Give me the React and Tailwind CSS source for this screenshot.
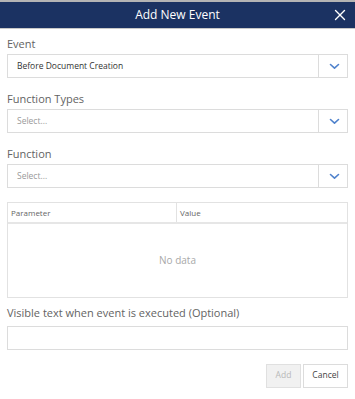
import { useState } from "react";

function Chevron() {
  return (
    <svg width="11" height="7" viewBox="0 0 11 7" fill="none" stroke="#4f82cc" strokeWidth="1.6" strokeLinecap="round" strokeLinejoin="round">
      <polyline points="1.5,1.5 5.5,5.2 9.5,1.5" />
    </svg>
  );
}

function SelectBox({ value, placeholder }) {
  return (
    <div className="flex h-[24px] border border-[#dcdcdc] bg-white">
      <div className={`flex-1 flex items-center pl-[9px] text-[8.5px] ${value ? "text-[#333]" : "text-[#9a9a9a]"}`}>
        {value || placeholder}
      </div>
      <div className="w-[29px] border-l border-[#dcdcdc] flex items-center justify-center pl-[2px]">
        <Chevron />
      </div>
    </div>
  );
}

function Field({ label, children, className }) {
  return (
    <div className={className}>
      <p className="text-[11px] leading-[16px] text-[#636363] mb-[2px]">{label}</p>
      {children}
    </div>
  );
}

export default function App() {
  const [text, setText] = useState("");

  return (
    <div className="w-[355px] h-[399px] bg-white overflow-hidden" style={{ fontFamily: "'Open Sans', 'Liberation Sans', sans-serif" }}>
      <div className="h-[2px] bg-[#b4b4b4]" />
      {/* Header */}
      <div className="relative h-[27px] bg-[#1b3262] flex items-center justify-center border-b border-[#c8c8c8]">
        <span className="text-white text-[12px]">Add New Event</span>
        <button className="absolute right-[9px] top-[7px] text-white">
          <svg width="12" height="12" viewBox="0 0 12 12" stroke="white" strokeWidth="1.4" strokeLinecap="round">
            <line x1="1.5" y1="1.5" x2="10.5" y2="10.5" />
            <line x1="10.5" y1="1.5" x2="1.5" y2="10.5" />
          </svg>
        </button>
      </div>

      <div className="px-[7px]">
        <Field label="Event" className="mt-[7px]">
          <SelectBox value="Before Document Creation" />
        </Field>
        <Field label="Function Types" className="mt-[13px]">
          <SelectBox placeholder="Select..." />
        </Field>
        <Field label="Function" className="mt-[13px]">
          <SelectBox placeholder="Select..." />
        </Field>

        {/* Parameters table */}
        <div className="mt-[14px] h-[96px] border border-[#e2e2e2] flex flex-col">
          <div className="flex h-[21px] border-b-2 border-[#e6e6e6] text-[8px] text-[#666]">
            <div className="w-[169px] border-r border-[#e2e2e2] flex items-center pl-[3px]">Parameter</div>
            <div className="flex-1 flex items-center pl-[3px]">Value</div>
          </div>
          <div className="flex-1 flex items-center justify-center text-[10px] text-[#a8a8a8]">No data</div>
        </div>

        <Field label="Visible text when event is executed (Optional)" className="mt-[7px]">
          <input
            value={text}
            onChange={e => setText(e.target.value)}
            className="w-full h-[24px] border border-[#dcdcdc] outline-none px-2 text-[9px]"
          />
        </Field>

        <div className="flex justify-end gap-[2px] mt-[14px]">
          <button disabled className="w-[35px] h-[24px] bg-[#f1f1f1] border border-[#e0e0e0] text-[8.5px] text-[#b8b8b8]">Add</button>
          <button className="w-[45px] h-[24px] bg-white border border-[#dcdcdc] text-[8.5px] text-[#444]">Cancel</button>
        </div>
      </div>
    </div>
  );
}
